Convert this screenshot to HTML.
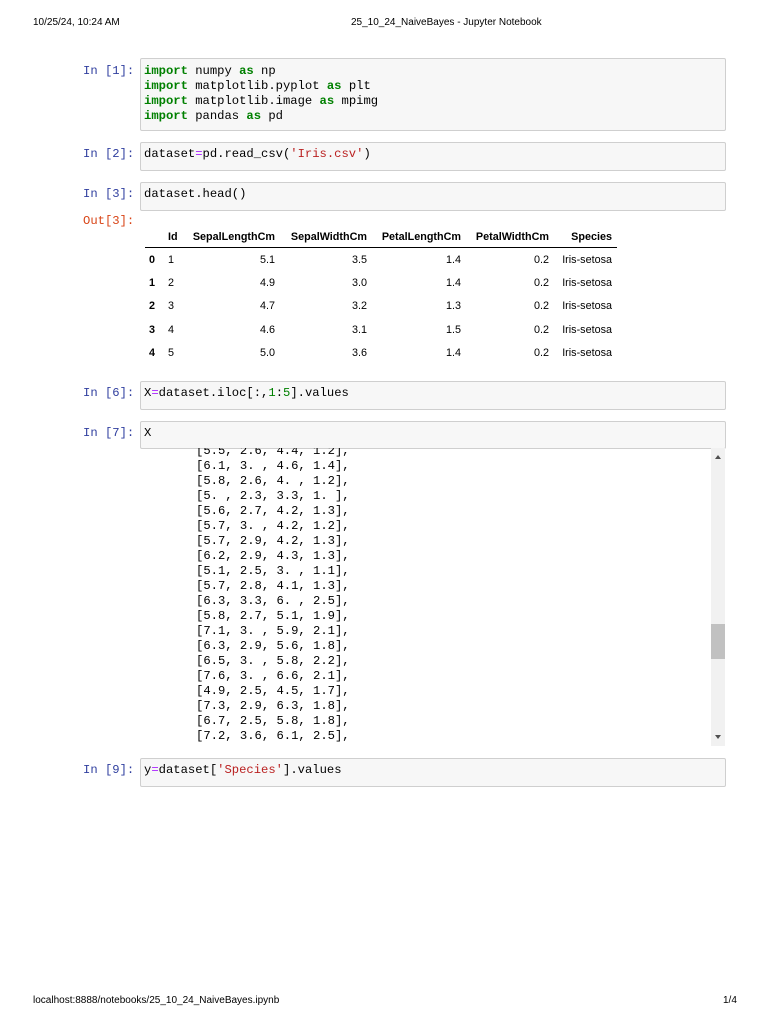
<!DOCTYPE html>
<html><head><meta charset="utf-8"><style>
body{margin:0;width:768px;height:1024px;background:#fff;position:relative;overflow:hidden;font-family:"Liberation Sans",sans-serif}
.a{position:absolute;white-space:pre}
.hf{font-size:10px;color:#000}
.m{font-family:"Liberation Mono",monospace;font-size:12.2px;line-height:15px;color:#000}
.p{color:#303f9f}.o{color:#d84315}
.box{position:absolute;left:140px;width:584px;border:1px solid #cfcfcf;background:#f7f7f7;border-radius:2px}
.k{color:#008000;font-weight:bold}.s{color:#ba2121}.e{color:#aa22ff}.n{color:#008000}
table{position:absolute;left:145px;top:226px;border-collapse:collapse;font-size:10.8px;color:#000;table-layout:fixed;width:472px}
th{font-weight:bold;text-align:right;padding:0 5px 0 0;height:21px;border-bottom:1px solid #000;white-space:nowrap}
td{text-align:right;padding:0 5px 0 0;height:23.3px;white-space:nowrap}
.i{font-weight:bold;text-align:left;padding:0 0 0 4px}
.d{text-align:left;padding:0 0 0 5px}
</style></head><body>
<div class="a hf" style="left:33px;top:17px">10/25/24, 10:24 AM</div>
<div class="a hf" style="left:351px;top:17px">25_10_24_NaiveBayes - Jupyter Notebook</div>

<div class="a m p" style="left:83px;top:64px">In [1]:</div>
<div class="box" style="top:58px;height:71px"></div>
<div class="a m" style="left:144px;top:64px"><span class="k">import</span> numpy <span class="k">as</span> np
<span class="k">import</span> matplotlib.pyplot <span class="k">as</span> plt
<span class="k">import</span> matplotlib.image <span class="k">as</span> mpimg
<span class="k">import</span> pandas <span class="k">as</span> pd</div>

<div class="a m p" style="left:83px;top:147px">In [2]:</div>
<div class="box" style="top:142px;height:27px"></div>
<div class="a m" style="left:144px;top:147px">dataset<span class="e">=</span>pd.read_csv(<span class="s">'Iris.csv'</span>)</div>

<div class="a m p" style="left:83px;top:187px">In [3]:</div>
<div class="box" style="top:182px;height:27px"></div>
<div class="a m" style="left:144px;top:187px">dataset.head()</div>
<div class="a m o" style="left:83px;top:214px">Out[3]:</div>

<table>
<colgroup><col style="width:18px"><col style="width:20px"><col style="width:97px"><col style="width:92px"><col style="width:94px"><col style="width:88px"><col style="width:63px"></colgroup>
<tr><th class="i"></th><th class="d">Id</th><th>SepalLengthCm</th><th>SepalWidthCm</th><th>PetalLengthCm</th><th>PetalWidthCm</th><th>Species</th></tr>
<tr><td class="i">0</td><td class="d">1</td><td>5.1</td><td>3.5</td><td>1.4</td><td>0.2</td><td>Iris-setosa</td></tr>
<tr><td class="i">1</td><td class="d">2</td><td>4.9</td><td>3.0</td><td>1.4</td><td>0.2</td><td>Iris-setosa</td></tr>
<tr><td class="i">2</td><td class="d">3</td><td>4.7</td><td>3.2</td><td>1.3</td><td>0.2</td><td>Iris-setosa</td></tr>
<tr><td class="i">3</td><td class="d">4</td><td>4.6</td><td>3.1</td><td>1.5</td><td>0.2</td><td>Iris-setosa</td></tr>
<tr><td class="i">4</td><td class="d">5</td><td>5.0</td><td>3.6</td><td>1.4</td><td>0.2</td><td>Iris-setosa</td></tr>
</table>

<div class="a m p" style="left:83px;top:386px">In [6]:</div>
<div class="box" style="top:381px;height:27px"></div>
<div class="a m" style="left:144px;top:386px">X<span class="e">=</span>dataset.iloc[:,<span class="n">1</span>:<span class="n">5</span>].values</div>

<div class="a m p" style="left:83px;top:426px">In [7]:</div>
<div class="box" style="top:421px;height:26px"></div>
<div class="a m" style="left:144px;top:426px">X</div>

<div style="position:absolute;left:140px;top:448px;width:586px;height:298px;overflow:hidden">
<div class="a m" style="left:56px;top:-4px">[5.5, 2.6, 4.4, 1.2],
[6.1, 3. , 4.6, 1.4],
[5.8, 2.6, 4. , 1.2],
[5. , 2.3, 3.3, 1. ],
[5.6, 2.7, 4.2, 1.3],
[5.7, 3. , 4.2, 1.2],
[5.7, 2.9, 4.2, 1.3],
[6.2, 2.9, 4.3, 1.3],
[5.1, 2.5, 3. , 1.1],
[5.7, 2.8, 4.1, 1.3],
[6.3, 3.3, 6. , 2.5],
[5.8, 2.7, 5.1, 1.9],
[7.1, 3. , 5.9, 2.1],
[6.3, 2.9, 5.6, 1.8],
[6.5, 3. , 5.8, 2.2],
[7.6, 3. , 6.6, 2.1],
[4.9, 2.5, 4.5, 1.7],
[7.3, 2.9, 6.3, 1.8],
[6.7, 2.5, 5.8, 1.8],
[7.2, 3.6, 6.1, 2.5],</div>
<div style="position:absolute;left:571px;top:0;width:14px;height:298px;background:#f1f1f1"></div>
<div style="position:absolute;left:571px;top:176px;width:14px;height:35px;background:#c1c1c1"></div>
<div style="position:absolute;left:575px;top:7px;width:0;height:0;border-left:3px solid transparent;border-right:3px solid transparent;border-bottom:4px solid #505050"></div>
<div style="position:absolute;left:575px;top:287px;width:0;height:0;border-left:3px solid transparent;border-right:3px solid transparent;border-top:4px solid #505050"></div>
</div>

<div class="a m p" style="left:83px;top:763px">In [9]:</div>
<div class="box" style="top:758px;height:27px"></div>
<div class="a m" style="left:144px;top:763px">y<span class="e">=</span>dataset[<span class="s">'Species'</span>].values</div>

<div class="a hf" style="left:33px;top:995px">localhost:8888/notebooks/25_10_24_NaiveBayes.ipynb</div>
<div class="a hf" style="left:723px;top:995px">1/4</div>
</body></html>
